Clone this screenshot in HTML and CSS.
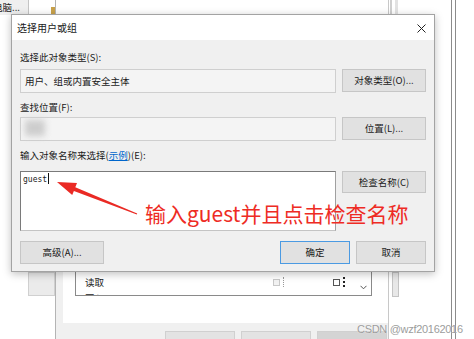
FILE: index.html
```html
<!DOCTYPE html>
<html lang="zh-CN">
<head>
    <meta charset="UTF-8">
    <meta name="viewport" content="width=device-width, initial-scale=1">
    <title>选择用户或组</title>
    <link rel="stylesheet" href="styles.css">
</head>
<body>
<div class="screen">

    <!-- 背后的属性窗口 -->
    <div class="col colA">
        <div class="topBtn"><span>电脑...</span></div>
    </div>
    <div class="col colB">
        <div class="topCell"><i class="tinyIcon"></i></div>
        <div class="sideBlock"></div>
    </div>
    <div class="col colMain">
        <div class="mainTop"></div>
        <div class="mainBody">
            <div class="permPanel">
                <div class="permList">
                    <div class="permRows">
                        <div class="permRow">
                            <span class="permName">读取</span>
                            <span class="chk checked"></span>
                            <span class="dots"></span>
                            <span class="chk"></span>
                            <span class="dots dark"></span>
                        </div>
                        <div class="permRow cut">
                            <span class="permName">写入</span>
                        </div>
                    </div>
                    <div class="listScroll">
                        <svg width="7" height="5" viewBox="0 0 7 5"><path d="M0.5 0.8 L3.5 3.8 L6.5 0.8" fill="none" stroke="#555" stroke-width="1"/></svg>
                    </div>
                </div>
            </div>
        </div>
        <div class="btnStrip">
            <span class="stripBtn"></span>
            <span class="stripBtn"></span>
            <span class="stripBtn dark"></span>
        </div>
    </div>
    <div class="col colScroll">
        <div class="scrollTop"></div>
        <div class="thumb"></div>
    </div>
    <div class="col colGap"></div>
    <div class="col colLines"></div>

    <!-- 选择用户或组 对话框 -->
    <div class="dialog">
        <div class="titleBar">
            <span>选择用户或组</span>
            <svg class="closeX" width="9" height="9" viewBox="0 0 9 9"><path d="M0.5 0.5 L8.5 8.5 M8.5 0.5 L0.5 8.5" stroke="#222" stroke-width="1"/></svg>
        </div>
        <div class="dlgBody">
            <div class="lbl first">选择此对象类型(S):</div>
            <div class="row r1">
                <div class="field">用户、组或内置安全主体</div>
                <div class="btn">对象类型(O)...</div>
            </div>

            <div class="lbl">查找位置(F):</div>
            <div class="row r2">
                <div class="field"><i class="blurBlob"></i></div>
                <div class="btn">位置(L)...</div>
            </div>

            <div class="lbl">输入对象名称来选择(<a class="link">示例</a>)(E):</div>
            <div class="row r3">
                <div class="nameBox">guest<i class="caret"></i></div>
                <div class="btn short">检查名称(C)</div>
            </div>

            <div class="bottomRow">
                <div class="btn wide">高级(A)...</div>
                <div class="spacer"></div>
                <div class="btn ok">确定</div>
                <div class="btn">取消</div>
            </div>
        </div>
    </div>

    <!-- 标注 -->
    <svg class="arrow" width="474" height="339" viewBox="0 0 474 339">
        <polygon points="57,182 77,183 75.3,187.2 137.2,213.4 136.8,214.6 73.9,190.9 72.2,195.1" fill="#ea2a24"/>
    </svg>
    <div class="note">输入guest并且点击检查名称</div>
    <div class="watermark">CSDN @wzf20162016</div>
</div>
</body>
</html>
```

FILE: styles.css
```css
*{
    box-sizing:border-box;
}
body{
    margin:0;
    background:#fff;
}
.screen{
    position:relative;
    width:474px;
    height:339px;
    overflow:hidden;
    display:flex;
    background:#fff;
    font-family:"Noto Sans CJK SC", "Liberation Sans", sans-serif;
    font-size:9.5px;
    color:#1a1a1a;
}
.col{
    display:flex;
    flex-direction:column;
    flex:none;
}

/* 背景窗口 */
.colA{
    width:28px;
}
.topBtn{
    height:15px;
    background:#efefef;
    overflow:hidden;
    white-space:nowrap;
    line-height:14px;
}
.topBtn span{
    margin-left:-7px;
}
.colB{
    width:27px;
}
.topCell{
    height:15px;
    border-left:1px solid #c4c4c4;
    display:flex;
    justify-content:flex-end;
    align-items:flex-end;
}
.tinyIcon{
    width:4px;
    height:7px;
    margin-bottom:1px;
    background:#c9a24a;
}
.sideBlock{
    margin-top:257px;
    height:24px;
    background:#ebebeb;
    border:1px solid #d0d0d0;
}
.colMain{
    width:333px;
    border-left:1px solid #b4b4b4;
}
.mainTop{
    height:15px;
}
.mainBody{
    flex:1;
    background:#f0f0f0;
    padding-left:7px;
    display:flex;
}
.permPanel{
    flex:1;
    background:#fff;
    display:flex;
    flex-direction:column;
    justify-content:flex-end;
    padding-bottom:27px;
}
.permList{
    margin-left:12px;
    width:297px;
    height:60px;
    border:1px solid #8a8a8a;
    background:#fff;
    display:flex;
}
.permRows{
    flex:1;
    display:flex;
    flex-direction:column;
    justify-content:flex-end;
    overflow:hidden;
}
.permRow{
    height:16px;
    flex:none;
    display:flex;
    align-items:center;
    padding-left:9px;
    line-height:16px;
}
.permRow.cut{
    height:5px;
    align-items:flex-start;
    overflow:hidden;
}
.permName{
    width:188px;
}
.chk{
    width:7px;
    height:7px;
    border:1px solid #555;
    background:#fff;
}
.chk.checked{
    border-color:#c8c8c8;
    background:#f2f2f2;
}
.dots{
    width:50px;
    height:10px;
    border-left:1px dotted #999;
    margin-left:3px;
}
.dots.dark{
    width:6px;
    border-left:2px dotted #222;
}
.listScroll{
    width:16px;
    display:flex;
    align-items:flex-end;
    justify-content:center;
    padding-bottom:5px;
}
.btnStrip{
    height:16px;
    background:#f0f0f0;
    display:flex;
    gap:6px;
    padding:8px 0 0 109px;
}
.stripBtn{
    width:70px;
    height:12px;
    background:#e3e3e3;
    border:1px solid #d0d0d0;
}
.stripBtn.dark{
    background:#d4d4d4;
}
.colScroll{
    width:11px;
    border-left:1px solid #c8c8c8;
}
.scrollTop{
    height:15px;
    background:linear-gradient(to right, #fff 0 1px, #cfcfcf 1px 3px, #fff 3px 6px, #e2e2e2 6px 9px, #fff 9px);
}
.thumb{
    margin-top:257px;
    margin-left:3px;
    width:7px;
    height:25px;
    background:#e8e8e8;
    border:1px solid #c4c4c4;
}
.colGap{
    width:52px;
}
.colLines{
    width:5px;
    border-left:1px solid #8c8c8c;
    border-right:1px solid #8c8c8c;
}

/* 对话框 */
.dialog{
    position:absolute;
    left:11px;
    top:14px;
    width:424px;
    height:258px;
    background:#f0f0f0;
    border:1px solid #a3a3a3;
    box-shadow:0 2px 8px rgba(0,0,0,.25);
    display:flex;
    flex-direction:column;
}
.titleBar{
    height:25px;
    flex:none;
    background:#fff;
    display:flex;
    align-items:center;
    justify-content:space-between;
    padding:0 8px 0 5px;
    font-size:10px;
    line-height:14px;
}
.closeX{
    margin-top:1px;
}
.dlgBody{
    padding:0 8px;
    display:flex;
    flex-direction:column;
}
.lbl{
    height:14px;
    line-height:14px;
    margin-top:7px;
    white-space:nowrap;
}
.lbl.first{
    margin-top:10px;
}
.link{
    color:#0066cc;
    text-decoration:underline;
}
.row{
    display:grid;
    grid-template-columns:316px 84px;
    column-gap:6px;
    align-items:start;
}
.r1{
    margin-top:5px;
}
.r2{
    margin-top:3px;
}
.r3{
    margin-top:9px;
}
.field{
    height:24px;
    background:#f4f4f4;
    border:1px solid #cfcfcf;
    padding-left:4px;
    line-height:22px;
    white-space:nowrap;
}
.blurBlob{
    display:block;
    width:20px;
    height:16px;
    margin-top:2px;
    background:#cdcdcd;
    filter:blur(3px);
}
.btn{
    height:23px;
    background:#e1e1e1;
    border:1px solid #c6c6c6;
    text-align:center;
    line-height:21px;
    white-space:nowrap;
}
.btn.short{
    height:22px;
    line-height:20px;
}
.nameBox{
    height:60px;
    background:#fff;
    border:1px solid #7a7a7a;
    border-bottom-color:#c4c4c4;
    border-right-color:#a0a0a0;
    padding:1px 2px;
    font-family:"DejaVu Sans Mono", monospace;
    font-size:8px;
    line-height:13px;
    color:#222;
}
.caret{
    display:inline-block;
    width:1px;
    height:11px;
    background:#111;
    vertical-align:-2px;
    margin-left:1px;
}
.bottomRow{
    margin-top:10px;
    display:flex;
    gap:6px;
}
.bottomRow .btn{
    width:70px;
}
.bottomRow .btn.wide{
    width:84px;
}
.spacer{
    flex:1;
}
.btn.ok{
    border-color:#4b9ae2;
}

/* 标注 */
.arrow{
    position:absolute;
    left:0;
    top:0;
    pointer-events:none;
}
.note{
    position:absolute;
    left:145px;
    top:201px;
    font-size:21px;
    line-height:24px;
    color:#ee2b24;
    white-space:nowrap;
}
.watermark{
    position:absolute;
    left:357px;
    top:322px;
    font-family:"Liberation Sans", sans-serif;
    font-size:11px;
    letter-spacing:-0.3px;
    line-height:15px;
    color:#9c9c9c;
    text-shadow:0 0 1px #fff;
    white-space:nowrap;
}
```
